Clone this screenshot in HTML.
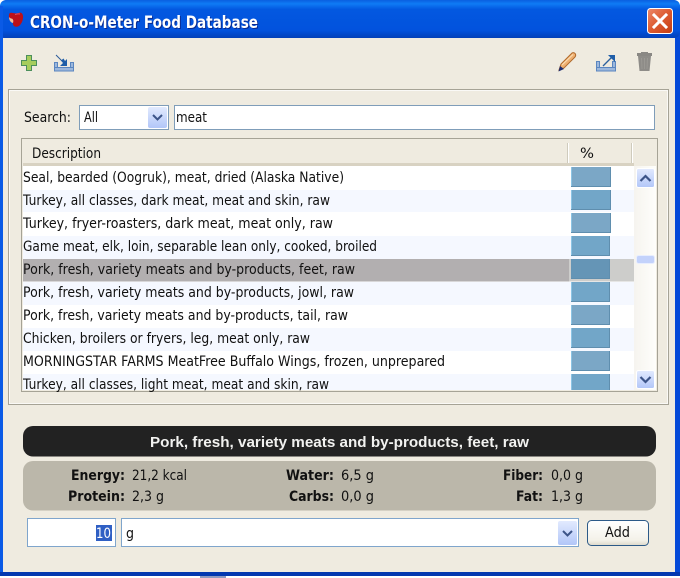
<!DOCTYPE html>
<html><head><meta charset="utf-8"><style>
html,body{margin:0;padding:0;background:#fff;width:680px;height:578px;overflow:hidden}
svg{display:block;filter:blur(.3px)}
text{font-family:"DejaVu Sans","Liberation Sans",sans-serif;font-size:14px;fill:#111}
.b{font-weight:bold}
</style></head><body>
<svg width="680" height="578" viewBox="0 0 680 578" xmlns="http://www.w3.org/2000/svg">
<defs>
<linearGradient id="tb" x1="0" y1="0" x2="0" y2="1">
<stop offset="0" stop-color="#0a5fe0"/><stop offset=".1" stop-color="#0f7bf5"/><stop offset=".25" stop-color="#0358e0"/><stop offset=".8" stop-color="#0252dd"/><stop offset="1" stop-color="#0340b8"/>
</linearGradient>
<linearGradient id="btn" x1="0" y1="0" x2="0" y2="1"><stop offset="0" stop-color="#e2eafe"/><stop offset="1" stop-color="#b2c6f8"/></linearGradient>
<linearGradient id="sb" x1="0" y1="0" x2="1" y2="0"><stop offset="0" stop-color="#f6f4ef"/><stop offset="1" stop-color="#fefefb"/></linearGradient>
<linearGradient id="add" x1="0" y1="0" x2="0" y2="1"><stop offset="0" stop-color="#fff"/><stop offset=".8" stop-color="#f3f1e8"/><stop offset="1" stop-color="#dcd8ca"/></linearGradient>
<linearGradient id="cl" x1="0" y1="0" x2="1" y2="1"><stop offset="0" stop-color="#ec8a6c"/><stop offset=".5" stop-color="#dc5a30"/><stop offset="1" stop-color="#c23c12"/></linearGradient>
</defs>

<!-- window -->
<path d="M0 574V8Q0 0 8 0H672Q680 0 680 8V574Z" fill="#0449d8"/>
<rect x="0" y="0" width="680" height="38" fill="url(#tb)" rx="6"/>
<rect x="0" y="6" width="3" height="568" fill="#0a5ae6"/>
<rect x="3" y="38" width="672" height="534" fill="#efebe0"/>
<rect x="0" y="572" width="680" height="4" fill="#0338b0"/>
<rect x="0" y="576" width="680" height="2" fill="#fff"/>
<rect x="200" y="576" width="26" height="2" fill="#8e99c0"/>

<!-- title apple: body with a bite out of the lower left -->
<path d="M9 15Q9 12 13 13Q17 14 20 12.500Q23.500 13 23 18Q22.500 23 19 26Q16 27.500 14 26Q12.500 24.500 13 23Q12 20.500 10 20Q8.500 18 9 15Z" fill="#bc1018"/>
<path d="M9 17Q10.500 19 12 18.500Q14 20 13 23Q11 22.500 10 21Q9 19 9 17Z" fill="#efc09a"/>
<path d="M15 14.500Q18 13.500 20 14" stroke="#e8505a" stroke-width="1" fill="none"/>
<text x="31" y="29" class="b" style="font-size:16.500px;fill:#0a2a90" textLength="228" lengthAdjust="spacingAndGlyphs">CRON-o-Meter Food Database</text>
<text x="30" y="28" class="b" style="font-size:16.500px;fill:#fff" textLength="228" lengthAdjust="spacingAndGlyphs">CRON-o-Meter Food Database</text>

<!-- close -->
<rect x="647.500" y="8.500" width="25" height="25" rx="3" fill="url(#cl)" stroke="#fff"/>
<path d="M654 15L666 27M666 15L654 27" stroke="#fff" stroke-width="3" stroke-linecap="square"/>

<!-- toolbar icons -->
<path d="M26.500 55.500h5v5h5v5h-5v5h-5v-5h-5v-5h5z" fill="#a6cd5c" stroke="#4c8f5c" stroke-width="1"/>
<rect x="54.500" y="62.500" width="3" height="8" fill="#9db8dc" stroke="#5b86c0" stroke-width="1"/>
<rect x="70.500" y="62.500" width="3" height="8" fill="#9db8dc" stroke="#5b86c0" stroke-width="1"/>
<rect x="54.500" y="67.500" width="19" height="3.500" fill="#9db8dc" stroke="#5b86c0" stroke-width="1"/>
<path d="M56 55L63 62" stroke="#2a5a98" stroke-width="1"/>
<path d="M67 59V66H60L63 63L61 60.500L63.500 58.500L65 61Z" fill="#1f5ea8"/>

<path d="M559 70L561 64L572 53Q574 52 575.500 54Q576 56 575 57L564 68Z" fill="#eeb072" stroke="#b06a2c" stroke-width="1"/>
<path d="M558.500 71.500L560 66L564 69Z" fill="#1c2c70"/>
<path d="M562 65L573 54.500" stroke="#fbe0b8" stroke-width="1"/>

<rect x="596.500" y="61.500" width="3" height="9" fill="#9db8dc" stroke="#5b86c0"/>
<rect x="612.500" y="61.500" width="3" height="9" fill="#9db8dc" stroke="#5b86c0"/>
<rect x="596.500" y="67.500" width="19" height="3.500" fill="#9db8dc" stroke="#5b86c0"/>
<path d="M603 66L612 57" stroke="#2a5f9c" stroke-width="1.300"/>
<path d="M608 55H615V62Z" fill="#1f5ea8"/>

<path d="M638 56H651L649.500 71H639.500Z" fill="#8e8c88"/>
<rect x="637" y="53" width="15" height="3" fill="#8a8884"/>
<rect x="641" y="52" width="7" height="2" fill="#8a8884"/>
<path d="M641.500 58L642 69M644.500 58V69M647.500 58L647 69" stroke="#9a9893"/>

<!-- main panel -->
<rect x="8.500" y="89.500" width="660" height="315" fill="#efebe0" stroke="#a6a396"/>
<rect x="9.500" y="90.500" width="658" height="313" fill="none" stroke="#fff" opacity=".7"/>

<text x="24" y="122" textLength="47" lengthAdjust="spacingAndGlyphs">Search:</text>
<rect x="79.500" y="105.500" width="89" height="24" fill="#fff" stroke="#7f9db9"/>
<text x="84" y="122" textLength="14" lengthAdjust="spacingAndGlyphs">All</text>
<rect x="148" y="107" width="19" height="21" rx="2" fill="url(#btn)"/>
<path d="M153 115L157.500 119.500L162 115" fill="none" stroke="#3c5488" stroke-width="2"/>
<rect x="174.500" y="105.500" width="480" height="24" fill="#fff" stroke="#7f9db9"/>
<text x="176" y="122" textLength="31" lengthAdjust="spacingAndGlyphs">meat</text>

<!-- table -->
<rect x="21.500" y="138.500" width="636" height="253" fill="#efebe0" stroke="#a6a396"/>
<rect x="23" y="166" width="611" height="224" fill="#fff"/>
<rect x="23" y="163" width="611" height="3" fill="#d8d2c2"/>
<rect x="567" y="143" width="1" height="20" fill="#cfcbbd"/>
<rect x="568" y="143" width="1" height="20" fill="#fff"/>
<rect x="631" y="143" width="1" height="20" fill="#cfcbbd"/>
<rect x="632" y="143" width="1" height="20" fill="#fff"/>
<text x="32" y="158" textLength="69" lengthAdjust="spacingAndGlyphs">Description</text>
<text x="580" y="158" textLength="14" lengthAdjust="spacingAndGlyphs">%</text>

<!-- zebra rows -->
<rect x="23" y="190" width="611" height="22" fill="#f5f8ff"/>
<rect x="23" y="236" width="611" height="23" fill="#f5f8ff"/>
<rect x="23" y="282" width="611" height="23" fill="#f5f8ff"/>
<rect x="23" y="328" width="611" height="23" fill="#f5f8ff"/>
<rect x="23" y="374" width="611" height="16" fill="#f5f8ff"/>
<rect x="23" y="259" width="546" height="22.500" fill="#b2afb0"/>
<rect x="569" y="259" width="65" height="22.500" fill="#cdcdcb"/>

<!-- bars: fill, then light left edge, dark right/bottom edge -->
<g>
<rect x="571" y="167" width="40" height="20" fill="#7ba7c6"/>
<rect x="571" y="190" width="40" height="20" fill="#72a6c8"/>
<rect x="571" y="213" width="40" height="20" fill="#7ba7c6"/>
<rect x="571" y="236" width="39" height="20" fill="#72a6c8"/>
<rect x="571" y="259" width="39" height="20" fill="#6595b6"/>
<rect x="571" y="282" width="39" height="20" fill="#72a6c8"/>
<rect x="571" y="305" width="39" height="20" fill="#7ba7c6"/>
<rect x="571" y="328" width="39" height="20" fill="#72a6c8"/>
<rect x="571" y="351" width="39" height="20" fill="#7ba7c6"/>
<rect x="571" y="374" width="39" height="16" fill="#72a6c8"/>
</g>
<path d="M571 167h1v20h-1zM571 190h1v20h-1zM571 213h1v20h-1zM571 236h1v20h-1zM571 282h1v20h-1zM571 305h1v20h-1zM571 328h1v20h-1zM571 351h1v20h-1zM571 374h1v16h-1z" fill="#8cc4e4"/>
<path d="M610 167h1v20h-1zM610 190h1v20h-1zM610 213h1v20h-1zM609 236h1v20h-1zM609 259h1v20h-1zM609 282h1v20h-1zM609 305h1v20h-1zM609 328h1v20h-1zM609 351h1v20h-1zM609 374h1v16h-1z" fill="#5f8eae"/>
<path d="M571 186h40v1h-40zM571 209h40v1h-40zM571 232h40v1h-40zM571 255h39v1h-39zM571 278h39v1h-39zM571 301h39v1h-39zM571 324h39v1h-39zM571 347h39v1h-39zM571 370h39v1h-39z" fill="#5f8eae"/>

<!-- row text -->
<text x="23" y="182" textLength="321" lengthAdjust="spacingAndGlyphs">Seal, bearded (Oogruk), meat, dried (Alaska Native)</text>
<text x="23" y="205" textLength="307" lengthAdjust="spacingAndGlyphs">Turkey, all classes, dark meat, meat and skin, raw</text>
<text x="23" y="228" textLength="310" lengthAdjust="spacingAndGlyphs">Turkey, fryer-roasters, dark meat, meat only, raw</text>
<text x="23" y="251" textLength="354" lengthAdjust="spacingAndGlyphs">Game meat, elk, loin, separable lean only, cooked, broiled</text>
<text x="23" y="274" textLength="332" lengthAdjust="spacingAndGlyphs">Pork, fresh, variety meats and by-products, feet, raw</text>
<text x="23" y="297" textLength="331" lengthAdjust="spacingAndGlyphs">Pork, fresh, variety meats and by-products, jowl, raw</text>
<text x="23" y="320" textLength="325" lengthAdjust="spacingAndGlyphs">Pork, fresh, variety meats and by-products, tail, raw</text>
<text x="23" y="343" textLength="287" lengthAdjust="spacingAndGlyphs">Chicken, broilers or fryers, leg, meat only, raw</text>
<text x="23" y="366" textLength="422" lengthAdjust="spacingAndGlyphs">MORNINGSTAR FARMS MeatFree Buffalo Wings, frozen, unprepared</text>
<text x="23" y="389" textLength="306" lengthAdjust="spacingAndGlyphs">Turkey, all classes, light meat, meat and skin, raw</text>

<!-- scrollbar -->
<rect x="634" y="166" width="22" height="224" fill="url(#sb)"/>
<rect x="636.500" y="168.500" width="18" height="19" rx="2" fill="url(#btn)" stroke="#fff"/>
<path d="M640.500 181L645.500 176L650.500 181" fill="none" stroke="#3c5488" stroke-width="2.200"/>
<rect x="636.500" y="255.500" width="18" height="8" rx="2" fill="#c3d2fb" stroke="#e8eefe"/>
<rect x="636.500" y="370.500" width="18" height="18" rx="2" fill="url(#btn)" stroke="#fff"/>
<path d="M640.500 377L645.500 382L650.500 377" fill="none" stroke="#3c5488" stroke-width="2.200"/>

<!-- detail header -->
<rect x="23" y="426" width="633" height="30.500" rx="10" fill="#222"/>
<text x="150" y="447" style="font-family:'Liberation Sans',sans-serif;font-size:14.500px;font-weight:bold;fill:#f2f2f0" textLength="379" lengthAdjust="spacingAndGlyphs">Pork, fresh, variety meats and by-products, feet, raw</text>

<rect x="23" y="461" width="633" height="49.500" rx="10" fill="#bbb7aa"/>
<text x="71" y="480" class="b" textLength="54" lengthAdjust="spacingAndGlyphs">Energy:</text>
<text x="68" y="501" class="b" textLength="57" lengthAdjust="spacingAndGlyphs">Protein:</text>
<text x="286" y="480" class="b" textLength="48" lengthAdjust="spacingAndGlyphs">Water:</text>
<text x="289" y="501" class="b" textLength="45" lengthAdjust="spacingAndGlyphs">Carbs:</text>
<text x="503" y="480" class="b" textLength="40" lengthAdjust="spacingAndGlyphs">Fiber:</text>
<text x="516" y="501" class="b" textLength="27" lengthAdjust="spacingAndGlyphs">Fat:</text>
<text x="132" y="480" textLength="55" lengthAdjust="spacingAndGlyphs">21,2 kcal</text>
<text x="132" y="501" textLength="32" lengthAdjust="spacingAndGlyphs">2,3 g</text>
<text x="341" y="480" textLength="33" lengthAdjust="spacingAndGlyphs">6,5 g</text>
<text x="341" y="501" textLength="33" lengthAdjust="spacingAndGlyphs">0,0 g</text>
<text x="551" y="480" textLength="32" lengthAdjust="spacingAndGlyphs">0,0 g</text>
<text x="551" y="501" textLength="32" lengthAdjust="spacingAndGlyphs">1,3 g</text>

<!-- bottom controls -->
<rect x="27.500" y="518.500" width="88" height="28" fill="#fff" stroke="#7fa5cc"/>
<rect x="96" y="525" width="16" height="16" fill="#2f5fc4"/>
<text x="96" y="538" style="fill:#fff" textLength="15" lengthAdjust="spacingAndGlyphs">10</text>
<rect x="121.500" y="518.500" width="457" height="28" fill="#fff" stroke="#7fa5cc"/>
<text x="126" y="538" textLength="8" lengthAdjust="spacingAndGlyphs">g</text>
<rect x="558" y="521" width="19" height="24" rx="2" fill="url(#btn)"/>
<path d="M563 531L567.500 535.500L572 531" fill="none" stroke="#3c5488" stroke-width="2"/>
<rect x="587.500" y="520.500" width="61" height="25" rx="4" fill="url(#add)" stroke="#2c5a88"/>
<text x="605" y="537" textLength="25" lengthAdjust="spacingAndGlyphs">Add</text>
</svg>
</body></html>
